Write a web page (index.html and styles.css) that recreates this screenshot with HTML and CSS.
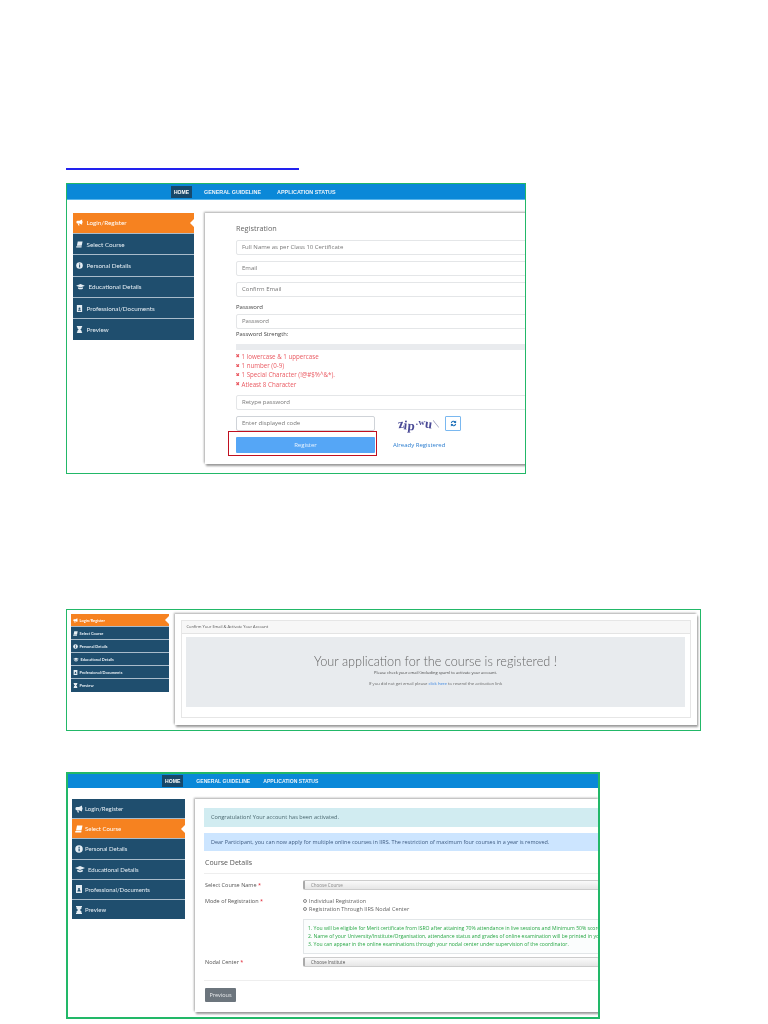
FILE: index.html
```html
<!DOCTYPE html>
<html lang="en">
<head>
<meta charset="utf-8">
<title>Registration steps</title>
<link rel="stylesheet" href="styles.css">
</head>
<body>
<svg class="defs" width="0" height="0" aria-hidden="true">
  <symbol id="i-mega" viewBox="0 0 16 16"><path fill="currentColor" d="M14 1v12L8 10.5H3.500A2.500 2.500 0 0 1 1 8V6.500A2.500 2.500 0 0 1 3.500 4H8zM4 11h3l1 4H5.500z"/><rect x="15" y="5" width="1" height="4" fill="currentColor"/></symbol>
  <symbol id="i-book" viewBox="0 0 16 16"><path fill="currentColor" d="M4 1h11l-2 10H2zM1.500 12H13l-.5 3H2a1.500 1.500 0 0 1-.5-3z"/></symbol>
  <symbol id="i-info" viewBox="0 0 16 16"><circle cx="8" cy="8" r="7.500" fill="currentColor"/><rect x="7" y="7" width="2.500" height="5.500" fill="#1f4e6e"/><rect x="7" y="3.500" width="2.500" height="2.300" fill="#1f4e6e"/></symbol>
  <symbol id="i-cap" viewBox="0 0 20 16"><path fill="currentColor" d="M10 2 20 6l-10 4L0 6zM4.500 9.500 10 11.700l5.500-2.200V13c-3 2-8 2-11 0z"/></symbol>
  <symbol id="i-file" viewBox="0 0 16 16"><path fill="currentColor" d="M2 0h12v16H2z"/><circle cx="8" cy="8" r="2.200" fill="#1f4e6e"/><path fill="#1f4e6e" d="M4.500 13c.3-2.500 1.500-3 3.500-3s3.200.5 3.500 3z"/></symbol>
  <symbol id="i-glass" viewBox="0 0 16 16"><path fill="currentColor" d="M2 0h12v2h-1v2c0 2-2 3-3.500 4C11 9 13 10 13 12v2h1v2H2v-2h1v-2c0-2 2-3 3.500-4C5 7 3 6 3 4V2H2z"/></symbol>
  <symbol id="i-cross" viewBox="0 0 8 8"><path fill="currentColor" d="M1 0h1.500L4 2l1.500-2H7l1 1-2 3 2 3-1 1H5.500L4 6 2.500 8H1L0 7l2-3-2-3z"/></symbol>
  <symbol id="i-sync" viewBox="0 0 16 16"><path fill="none" stroke="currentColor" stroke-width="2.400" d="M3 7a5 5 0 0 1 9-2M13 9a5 5 0 0 1-9 2"/><path fill="currentColor" d="M14 1v6H8zM2 15V9h6z"/></symbol>
</svg>

<main class="page">
  <div class="link-rule"></div>

  <section class="frame frame-one">
    <nav class="topnav nav-one">
      <span class="nav-home">HOME</span>
      <span>GENERAL GUIDELINE</span>
      <span class="nav-last">APPLICATION STATUS</span>
    </nav>
    <div class="frame-body body-one">
      <ul class="side side-one">
        <li class="on"><svg class="ic"><use href="#i-mega"/></svg>Login/Register</li>
        <li><svg class="ic"><use href="#i-book"/></svg>Select Course</li>
        <li><svg class="ic"><use href="#i-info"/></svg>Personal Details</li>
        <li><svg class="ic wide"><use href="#i-cap"/></svg>Educational Details</li>
        <li><svg class="ic"><use href="#i-file"/></svg>Professional/Documents</li>
        <li><svg class="ic"><use href="#i-glass"/></svg>Preview</li>
      </ul>
      <div class="card card-one">
        <h2 class="reg-title">Registration</h2>
        <div class="field f-name">Full Name as per Class 10 Certificate</div>
        <div class="field f-email">Email</div>
        <div class="field f-confirm">Confirm Email</div>
        <div class="label">Password</div>
        <div class="field f-pass">Password</div>
        <div class="label strength">Password Strength:</div>
        <div class="meter"></div>
        <ul class="rules">
          <li><svg class="x"><use href="#i-cross"/></svg>1 lowercase &amp; 1 uppercase</li>
          <li><svg class="x"><use href="#i-cross"/></svg>1 number (0-9)</li>
          <li><svg class="x"><use href="#i-cross"/></svg>1 Special Character (!@#$%^&amp;*).</li>
          <li><svg class="x"><use href="#i-cross"/></svg>Atleast 8 Character</li>
        </ul>
        <div class="field f-retype">Retype password</div>
        <div class="captcha-row">
          <div class="field f-code">Enter displayed code</div>
          <div class="captcha"><span class="c1">z</span><span class="c2">ip</span><span class="c3">.w</span><span class="c4">u</span><span class="c5">\</span></div>
          <div class="refresh"><svg class="sync"><use href="#i-sync"/></svg></div>
        </div>
        <div class="submit-row">
          <div class="submit">Register</div>
          <a class="already">Already Registered</a>
          <div class="red-box"></div>
        </div>
      </div>
    </div>
  </section>

  <section class="frame frame-two">
    <ul class="side side-two">
      <li class="on"><svg class="ic"><use href="#i-mega"/></svg>Login/Register</li>
      <li><svg class="ic"><use href="#i-book"/></svg>Select Course</li>
      <li><svg class="ic"><use href="#i-info"/></svg>Personal Details</li>
      <li><svg class="ic wide"><use href="#i-cap"/></svg>Educational Details</li>
      <li><svg class="ic"><use href="#i-file"/></svg>Professional/Documents</li>
      <li><svg class="ic"><use href="#i-glass"/></svg>Preview</li>
    </ul>
    <div class="card card-two">
      <div class="panel">
        <div class="panel-head">Confirm Your Email &amp; Activate Your Account</div>
        <div class="jumbo">
          <h1>Your application for the course is registered !</h1>
          <p class="j1">Please check your email (including spam) to activate your account.</p>
          <p class="j2">If you did not get email please <a>click here</a> to resend the activation link</p>
        </div>
      </div>
    </div>
  </section>

  <section class="frame frame-three">
    <nav class="topnav nav-three">
      <span class="nav-home">HOME</span>
      <span>GENERAL GUIDELINE</span>
      <span>APPLICATION STATUS</span>
    </nav>
    <div class="frame-body body-three">
      <ul class="side side-three">
        <li><svg class="ic"><use href="#i-mega"/></svg>Login/Register</li>
        <li class="on"><svg class="ic"><use href="#i-book"/></svg>Select Course</li>
        <li><svg class="ic"><use href="#i-info"/></svg>Personal Details</li>
        <li><svg class="ic wide"><use href="#i-cap"/></svg>Educational Details</li>
        <li><svg class="ic"><use href="#i-file"/></svg>Professional/Documents</li>
        <li><svg class="ic"><use href="#i-glass"/></svg>Preview</li>
      </ul>
      <div class="card card-three">
        <div class="alert teal">Congratulation! Your account has been activated.</div>
        <div class="alert blue">Dear Participant, you can now apply for multiple online courses in IIRS. The restriction of maximum four courses in a year is removed.</div>
        <h3 class="details">Course Details</h3>
        <div class="form-grid">
          <div class="fl">Select Course Name <b>*</b></div>
          <div class="select">Choose Course</div>
          <div class="fl mode">Mode of Registration <b>*</b></div>
          <div class="radios">
            <div class="radio"><i></i>Individual Registration</div>
            <div class="radio"><i></i>Registration Through IIRS Nodal Center</div>
          </div>
          <div></div>
          <div class="note">
            <p>1. You will be eligible for Merit certificate from ISRO after attaining 70% attendance in live sessions and Minimum 50% score</p>
            <p>2. Name of your University/Institute/Organisation, attendance status and grades of online examination will be printed in your</p>
            <p>3. You can appear in the online examinations through your nodal center under supervision of the coordinator.</p>
          </div>
          <div class="fl">Nodal Center <b>*</b></div>
          <div class="select dark">Choose Institute</div>
        </div>
        <div class="foot"><span class="prev">Previous</span></div>
      </div>
    </div>
  </section>
</main>
</body>
</html>
```

FILE: styles.css
```css
* { box-sizing: border-box; }
html, body { margin: 0; padding: 0; background: #fff; }
body { font-family: "Open Sans", "Liberation Sans", sans-serif; color: #555; overflow: hidden; }
ul { list-style: none; margin: 0; padding: 0; }
h1, h2, h3, p { margin: 0; font-weight: 400; }
.defs { position: absolute; }

.page { height: 1024px; padding: 168px 0 0 66px; }
.link-rule { width: 233px; height: 1.500px; background: #2222ee; }

.frame { border: 1.500px solid #22b868; overflow: hidden; background: #fff; filter: blur(.4px); }
.frame-one { width: 460px; height: 291px; margin-top: 13.500px; }
.frame-two { width: 635px; height: 122px; margin-top: 135px; display: flex; padding: 4px 3px 0 3.500px; gap: 6px; }
.frame-three { width: 534px; height: 247px; margin-top: 41px; border-width: 2px; }

/* top navigation */
.topnav { display: flex; align-items: center; background: #0a88d8; color: #e8f2fa; font-family: "Liberation Sans", sans-serif; font-weight: 700; }
.nav-one { height: 16px; padding-left: 104px; gap: 12px; font-size: 5.400px; border-bottom: 1px solid #58b4ea; }
.nav-one .nav-home { font-size: 5px; }
.nav-last { margin-left: 4px; }
.nav-three { height: 14px; padding-left: 94px; gap: 13px; font-size: 5.100px; }
.nav-home { background: #17486a; color: #fff; padding: 3px 3px; }

.frame-body { display: flex; align-items: flex-start; }
.body-one { padding: 12.500px 0 0 5.500px; gap: 11px; }
.body-three { padding: 11px 0 0 4px; gap: 10px; }

/* sidebar */
.side { flex: none; background: #a9bccb; color: #e6eef4; font-family: Lato, "Open Sans", sans-serif; }
.side li { display: flex; align-items: center; background: #1f4e6e; position: relative; white-space: nowrap; }
.side li + li { margin-top: 1px; }
.side li.on { background: #f68220; color: #fff; }
.side li.on::after { content: ""; position: absolute; right: 0; top: 50%; margin-top: -4px; border: 4px solid transparent; border-right-color: #fff; border-left: 0; }
.ic { flex: none; width: 7px; height: 7px; margin-right: 3px; }
.ic.wide { width: 9px; }
.side-one { width: 121.500px; }
.side-one li { height: 20.400px; padding-left: 3px; font-size: 6.300px; }
.side-one .ic { margin-right: 4px; }
.side-two { width: 98px; align-self: flex-start; }
.side-two li { height: 12.100px; padding-left: 2px; font-size: 3.900px; font-weight: 700; }
.side-two .ic { width: 5px; height: 5px; margin-right: 2px; }
.side-two .ic.wide { width: 6px; }
.side-three { width: 113px; }
.side-three li { height: 19.200px; padding-left: 3px; font-size: 6px; }
.side-three .ic { width: 8px; height: 8px; margin-right: 2px; }
.side-three .ic.wide { width: 10px; margin-right: 3px; }

/* cards */
.card { background: #fff; box-shadow: -1px -1px 2px #aaa, 1px 2px 2px #999; }
.card-one { width: 340px; height: 251px; padding: 10.500px 0 0 31px; }
.reg-title { font-size: 7.300px; line-height: 11px; color: #666; }
.field { height: 15px; width: 320px; border: 1px solid #e4e6e8; border-radius: 2px; padding-left: 5px; font-size: 6px; line-height: 13px; color: #777; }
.f-name { margin-top: 6px; }
.f-email { margin-top: 6px; }
.f-confirm { margin-top: 5.500px; }
.label { font-size: 6px; line-height: 8px; color: #444; margin-top: 6.500px; }
.f-pass { margin-top: 3px; }
.strength { margin-top: 1px; font-size: 5.800px; }
.meter { height: 6px; width: 320px; background: #e9ebee; margin-top: 6px; }
.rules { margin-top: 1.500px; color: #ea5a62; font-size: 6.200px; }
.rules li { height: 9.300px; display: flex; align-items: center; white-space: nowrap; }
.x { width: 3.500px; height: 3.500px; margin-right: 2px; flex: none; }
.f-retype { margin-top: 6px; }
.captcha-row { display: flex; margin-top: 6px; height: 15px; align-items: flex-start; }
.f-code { width: 139px; border-color: #cfd3d8; }
.captcha { width: 47px; margin-left: 23px; color: #4a4a96; font-family: "Liberation Serif", serif; font-size: 13px; font-weight: 700; line-height: 15px; white-space: nowrap; letter-spacing: .4px; }
.captcha span { display: inline-block; }
.c1 { transform: rotate(-6deg); }
.c2 { transform: rotate(6deg) translateY(2px); }
.c3 { transform: translateY(-3px); font-size: 9px; }
.c4 { transform: rotate(8deg); }
.c5 { transform: rotate(-20deg); font-weight: 400; color: #8888b0; margin-left: 1px; }
.refresh { width: 16px; height: 15px; border: 1px solid #7ab8f0; border-radius: 1px; display: flex; align-items: center; justify-content: center; color: #1c6fb8; }
.sync { width: 7px; height: 7px; }
.submit-row { position: relative; display: flex; align-items: center; margin-top: 6.500px; height: 16px; }
.submit { width: 139px; height: 16px; border-radius: 1px; background: #55a6f6; color: #e8f3fe; text-align: center; font-size: 6px; line-height: 16px; }
.already { margin-left: 18px; font-size: 6px; color: #2e7fd0; white-space: nowrap; }
.red-box { position: absolute; left: -8px; top: -6px; width: 149px; height: 24.500px; border: 1.500px solid #c01020; }

/* frame two */
.card-two { width: 522px; height: 111px; padding: 5.500px 6px 6px; }
.panel { height: 98.500px; border: 1px solid #e6e6e6; }
.panel-head { height: 13px; background: #f7f7f7; border-bottom: 1px solid #e4e4e4; padding-left: 5px; font-size: 4px; line-height: 12px; color: #555; }
.jumbo { height: 70px; margin: 3px 4.500px 0; background: #e8ebee; text-align: center; padding-top: 15px; color: #444; }
.jumbo h1 { font-family: Lato, "Open Sans", sans-serif; font-size: 12.700px; line-height: 18px; font-weight: 300; color: #666; }
.j1 { font-size: 4px; line-height: 6px; }
.j2 { font-size: 4.200px; line-height: 6px; margin-top: 5px; color: #666; }
.j2 a { color: #2e7fe0; }

/* frame three */
.card-three { width: 410px; height: 212.500px; padding: 8.500px 0 0 9px; }
.alert { height: 19px; width: 394px; padding-left: 7px; font-size: 6px; line-height: 19px; color: #4b6870; white-space: nowrap; overflow: hidden; }
.teal { background: #d1ecf1; font-size: 5.600px; }
.blue { background: #cce5ff; margin-top: 6px; height: 18px; line-height: 18px; color: #3d5a80; font-size: 5.460px; }
.details { font-size: 7px; line-height: 11px; color: #555; margin-top: 6px; padding-bottom: 5px; border-bottom: 1px solid #eee; width: 394px; padding-left: 1px; }
.form-grid { display: grid; grid-template-columns: 98px 296px; grid-auto-rows: auto; padding: 6px 0 0 1px; font-size: 5.500px; }
.fl { line-height: 10px; color: #555; }
.fl b { color: #e02030; font-weight: 400; }
.fl.mode { margin-top: 6px; }
.select { height: 10px; border: 1px solid #ccc; border-left: 2px solid #aaa; border-radius: 2px; background: linear-gradient(#fafafa, #e6e6e6); font-size: 4.500px; line-height: 8px; padding-left: 6px; color: #888; }
.select.dark { color: #555; }
.radios { margin-top: 7px; height: 22px; }
.radio { display: flex; align-items: center; height: 8.500px; font-size: 5.500px; color: #666; white-space: nowrap; }
.radio i { width: 4px; height: 4px; border: .7px solid #888; border-radius: 50%; margin-right: 2px; flex: none; }
.note { height: 35px; width: 296px; border: 1px solid #e2e6e8; background: #fbfdfd; padding: 4px 0 0 4px; color: #28a745; font-size: 5.100px; font-weight: 700; line-height: 8px; white-space: nowrap; overflow: hidden; margin-bottom: 3px; }
.foot { display: flex; width: 394px; border-top: 1px solid #eee; margin-top: 13px; padding: 7px 0 0 1px; }
.prev { width: 31px; height: 14px; background: #6c757d; border-radius: 1px; color: #e8eaec; font-size: 5.500px; line-height: 14px; text-align: center; }
```
